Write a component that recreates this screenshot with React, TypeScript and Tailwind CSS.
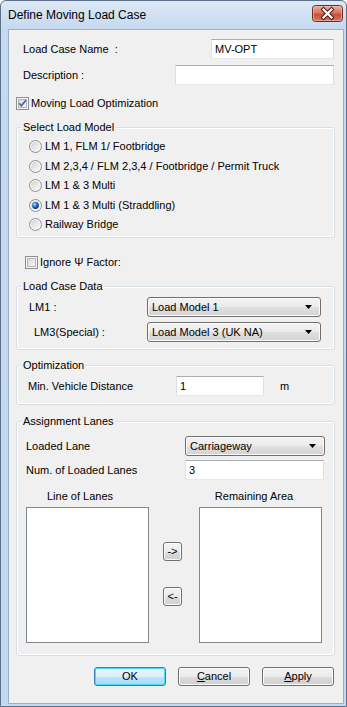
import React from 'react';

function TextBox({ value = '', className = '' }: { value?: string; className?: string }) {
  return (
    <div
      className={`h-[20px] bg-white border border-t-[#abadb3] border-l-[#dbdfe6] border-r-[#dbdfe6] border-b-[#e3e9ef] flex items-center pl-[3px] ${className}`}
    >
      {value}
    </div>
  );
}

function Combo({ value, className = '' }: { value: string; className?: string }) {
  return (
    <div
      className={`h-[20px] rounded-[3px] border border-[#707070] bg-[linear-gradient(to_bottom,#f3f3f3_0%,#ebebeb_50%,#e0e0e0_50%,#d3d3d3_100%)] shadow-[inset_0_0_0_1px_#fbfbfb] flex items-center pl-[4px] pr-[8px] ${className}`}
    >
      <span className="flex-1">{value}</span>
      <svg width="7" height="4" viewBox="0 0 7 4">
        <path d="M0 0H7L3.5 4Z" fill="#000" />
      </svg>
    </div>
  );
}

function Btn({ children, className = '', def = false }: { children: React.ReactNode; className?: string; def?: boolean }) {
  return (
    <div
      className={
        def
          ? `h-[19px] rounded-[3px] border border-[#3c7fb1] bg-[linear-gradient(to_bottom,#eaf6fd_0%,#d9f0fc_50%,#bee6fd_50%,#a7d9f5_100%)] shadow-[inset_0_0_0_1px_#48d8fb] flex items-center justify-center ${className}`
          : `h-[19px] rounded-[3px] border border-[#707070] bg-[linear-gradient(to_bottom,#f3f3f3_0%,#ebebeb_50%,#dddddd_50%,#cfcfcf_100%)] shadow-[inset_0_0_0_1px_#fbfbfb] flex items-center justify-center ${className}`
      }
    >
      {children}
    </div>
  );
}

function CheckBox({ checked = false }: { checked?: boolean }) {
  return (
    <svg width="13" height="13" viewBox="0 0 13 13" className="shrink-0">
      <defs>
        <linearGradient id="cbg" x1="0" y1="0" x2="1" y2="1">
          <stop offset="0" stopColor="#d6d8db" />
          <stop offset="1" stopColor="#f7f7f7" />
        </linearGradient>
      </defs>
      <rect x="0.5" y="0.5" width="12" height="12" fill="#f6f6f6" stroke="#8e8f8f" />
      <rect x="2.5" y="2.5" width="8" height="8" fill="url(#cbg)" stroke="#b3b6ba" />
      {checked && <path d="M3.2 6.3 L5.4 8.8 L9.9 3.3" fill="none" stroke="#4c60a0" strokeWidth="1.7" />}
    </svg>
  );
}

function Radio({ checked = false }: { checked?: boolean }) {
  return (
    <svg width="13" height="13" viewBox="0 0 13 13" className="shrink-0">
      <defs>
        <linearGradient id="rbg" x1="0" y1="0" x2="1" y2="1">
          <stop offset="0" stopColor="#d2d2d2" />
          <stop offset="1" stopColor="#fbfbfb" />
        </linearGradient>
        <radialGradient id="rdot" cx="0.38" cy="0.35" r="0.7">
          <stop offset="0" stopColor="#b4e6fc" />
          <stop offset="0.45" stopColor="#2a7ccc" />
          <stop offset="1" stopColor="#0b2857" />
        </radialGradient>
      </defs>
      <circle cx="6.5" cy="6.5" r="6" fill="#f4f4f4" stroke="#8e8f8f" />
      <circle cx="6.5" cy="6.5" r="4.4" fill="url(#rbg)" />
      {checked && <circle cx="6.5" cy="6.5" r="3.4" fill="url(#rdot)" />}
    </svg>
  );
}

function Group({ title, className = '', children }: { title: string; className?: string; children?: React.ReactNode }) {
  return (
    <div className={`relative ml-[7px] mr-[8px] rounded-[3px] border border-[#d5dfe5] shadow-[inset_0_0_0_1px_#ffffff] ${className}`}>
      <span className="absolute left-[4px] top-[-8px] bg-[#f0f0f0] px-[2px] leading-[14px]">{title}</span>
      {children}
    </div>
  );
}

function CloseButton() {
  return (
    <svg width="31" height="17" viewBox="0 0 31 17" className="shrink-0">
      <defs>
        <linearGradient id="clg" x1="0" y1="0" x2="0" y2="1">
          <stop offset="0" stopColor="#eab0a3" />
          <stop offset="0.45" stopColor="#d7775f" />
          <stop offset="0.55" stopColor="#c8503b" />
          <stop offset="1" stopColor="#d67a62" />
        </linearGradient>
      </defs>
      <rect x="0.5" y="0.5" width="30" height="16" rx="3" fill="url(#clg)" stroke="#6f2a22" />
      <rect x="1.5" y="1.5" width="28" height="14" rx="2" fill="none" stroke="#f2c4b8" strokeOpacity="0.6" />
      <path d="M11.5 4.5 L19.5 12.5 M19.5 4.5 L11.5 12.5" stroke="#4a1d19" strokeWidth="4.2" strokeLinecap="square" />
      <path d="M11.5 4.5 L19.5 12.5 M19.5 4.5 L11.5 12.5" stroke="#ffffff" strokeWidth="2.2" strokeLinecap="square" />
    </svg>
  );
}

export default function App() {
  const radios = [
    'LM 1, FLM 1/ Footbridge',
    'LM 2,3,4 / FLM 2,3,4 / Footbridge / Permit Truck',
    'LM 1 & 3 Multi',
    'LM 1 & 3 Multi (Straddling)',
    'Railway Bridge',
  ];
  return (
    <div className="w-[347px] h-[707px] rounded-t-[6px] border border-[#5b718b] bg-[linear-gradient(to_bottom,#dde8f5_0px,#c6d9ef_28px,#c4d8ee_100%)] flex flex-col font-['Liberation_Sans',Arial,sans-serif] text-black">
      <div className="h-[28px] shrink-0 flex items-start">
        <span className="ml-[7px] mt-[6px] text-[12px] leading-[16px]">Define Moving Load Case</span>
        <div className="ml-auto mr-[3px] mt-[4px] flex">
          <CloseButton />
        </div>
      </div>
      <div className="ml-[7px] mr-[2px] mb-[2px] flex-1 border border-[#9bb0c8] bg-[#f0f0f0] flex flex-col text-[11px] leading-[13px]">
        <div className="mt-[9px] h-[20px] flex items-center pr-[9px]">
          <span className="ml-[14px]">Load Case Name&nbsp; :</span>
          <TextBox className="ml-auto w-[123px]" value="MV-OPT" />
        </div>
        <div className="mt-[6px] h-[20px] flex items-center pr-[9px]">
          <span className="ml-[14px]">Description :</span>
          <TextBox className="ml-auto w-[159px]" />
        </div>
        <div className="mt-[10px] h-[16px] flex items-center pl-[7px]">
          <CheckBox checked />
          <span className="ml-[2px]">Moving Load Optimization</span>
        </div>

        <Group title="Select Load Model" className="mt-[16px] h-[111px]">
          <div className="pt-[9px] pl-[12px] flex flex-col">
            {radios.map((r, i) => (
              <div key={r} className="h-[19.5px] flex items-center">
                <Radio checked={i === 3} />
                <span className="ml-[3px]">{r}</span>
              </div>
            ))}
          </div>
        </Group>

        <div className="mt-[16px] h-[16px] flex items-center pl-[16px]">
          <CheckBox />
          <span className="ml-[2px]">Ignore Ψ Factor:</span>
        </div>

        <Group title="Load Case Data" className="mt-[16px] h-[64px]">
          <div className="pt-[10px] flex flex-col">
            <div className="h-[20px] flex items-center">
              <span className="ml-[12px]">LM1 :</span>
              <Combo className="ml-auto mr-[13px] w-[174px]" value="Load Model 1" />
            </div>
            <div className="mt-[5px] h-[20px] flex items-center">
              <span className="ml-[17px]">LM3(Special) :</span>
              <Combo className="ml-auto mr-[13px] w-[174px]" value="Load Model 3 (UK NA)" />
            </div>
          </div>
        </Group>

        <Group title="Optimization" className="mt-[15px] h-[40px]">
          <div className="pt-[10px] h-[30px] flex items-center">
            <span className="w-[159px] pl-[11px]">Min. Vehicle Distance</span>
            <TextBox className="w-[88px]" value="1" />
            <span className="ml-[16px]">m</span>
          </div>
        </Group>

        <Group title="Assignment Lanes" className="mt-[16px] h-[235px]">
          <div className="pt-[14px] flex flex-col">
            <div className="h-[20px] flex items-center">
              <span className="w-[168px] pl-[9px]">Loaded Lane</span>
              <Combo className="w-[140px]" value="Carriageway" />
            </div>
            <div className="mt-[4px] h-[20px] flex items-center">
              <span className="w-[168px] pl-[9px]">Num. of Loaded Lanes</span>
              <TextBox className="w-[139px]" value="3" />
            </div>
            <div className="mt-[9px] h-[14px] flex items-center">
              <span className="ml-[9px] w-[108px] text-center">Line of Lanes</span>
              <span className="ml-[65px] w-[110px] text-center">Remaining Area</span>
            </div>
            <div className="mt-[4px] h-[136px] flex">
              <div className="ml-[9px] w-[123px] h-full border border-[#828790] bg-white" />
              <div className="ml-[14px] w-[19px] flex flex-col">
                <Btn className="mt-[35px] w-[19px]">-&gt;</Btn>
                <Btn className="mt-[26px] w-[19px]">&lt;-</Btn>
              </div>
              <div className="ml-[17px] w-[123px] h-full border border-[#828790] bg-white" />
            </div>
          </div>
        </Group>

        <div className="mt-[11px] h-[19px] flex justify-end pr-[9px] gap-[12px]">
          <Btn def className="w-[72px]">OK</Btn>
          <Btn className="w-[72px]">
            <span><span className="underline underline-offset-[1px]">C</span>ancel</span>
          </Btn>
          <Btn className="w-[72px]">
            <span><span className="underline underline-offset-[1px]">A</span>pply</span>
          </Btn>
        </div>
      </div>
    </div>
  );
}
